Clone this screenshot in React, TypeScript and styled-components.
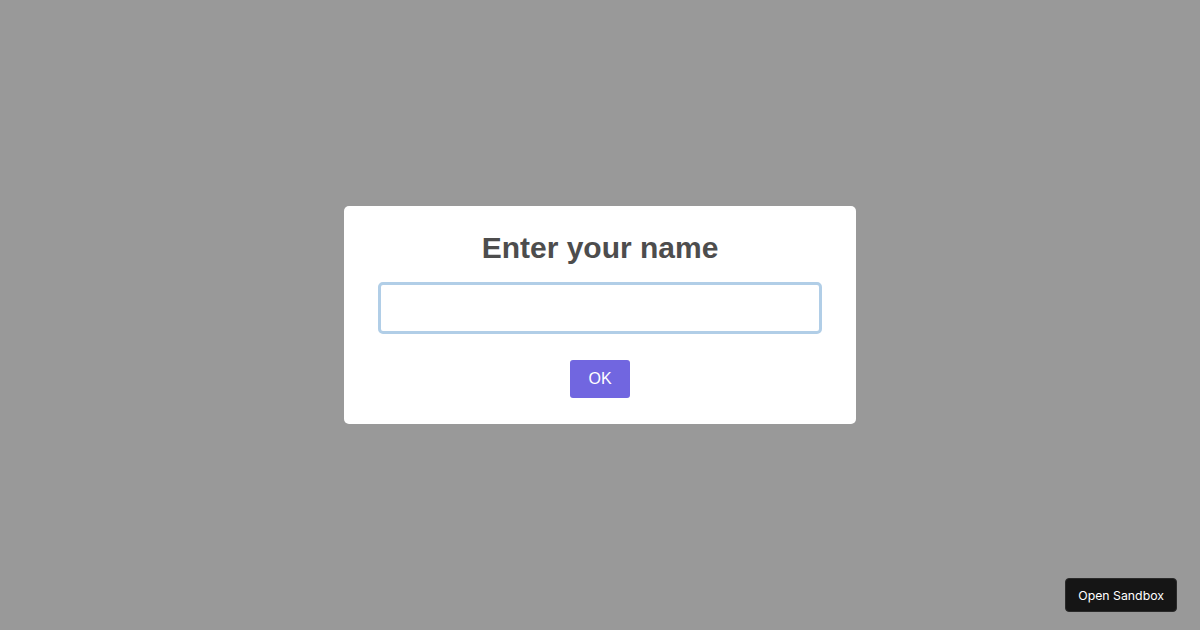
import React from 'react'
import styled, { createGlobalStyle } from 'styled-components'

const GlobalStyle = createGlobalStyle`
  html, body {
    margin: 0;
    padding: 0;
    height: 100%;
  }
  body {
    background: #999999;
    font-family: "Liberation Sans", Arial, sans-serif;
  }
  #root {
    height: 100%;
  }
`

const Page = styled.main`
  height: 630px;
  display: flex;
  align-items: center;
  justify-content: center;
`

const Dialog = styled.form`
  width: 512px;
  box-sizing: border-box;
  padding: 25px 34px 26px;
  background: #ffffff;
  border-radius: 5px;
  display: flex;
  flex-direction: column;
  align-items: center;
`

const Title = styled.h1`
  margin: 0 0 17px;
  font-size: 30px;
  line-height: 34px;
  font-weight: 700;
  color: #4d4d4d;
  text-align: center;
`

const NameInput = styled.input`
  width: 100%;
  height: 52px;
  box-sizing: border-box;
  padding: 0 14px;
  border: 3px solid #b1cee7;
  border-radius: 5px;
  outline: none;
  font-family: inherit;
  font-size: 18px;
  color: #333333;
  caret-color: #333333;
`

const OkButton = styled.button`
  margin-top: 26px;
  width: 60px;
  height: 38px;
  border: none;
  border-radius: 3px;
  background: #7166e0;
  color: #ffffff;
  font-family: inherit;
  font-size: 16px;
  cursor: pointer;
`

const SandboxButton = styled.a`
  position: fixed;
  right: 23px;
  bottom: 18px;
  height: 34px;
  padding: 0 12px;
  display: flex;
  align-items: center;
  background: #151515;
  border: 1px solid #2a2a2a;
  box-sizing: border-box;
  border-radius: 4px;
  color: #ffffff;
  font-family: Inter, "Noto Sans", sans-serif;
  font-size: 12.3px;
  text-decoration: none;
`

export default function App() {
  return (
    <>
      <GlobalStyle />
      <Page>
        <Dialog onSubmit={(e) => e.preventDefault()}>
          <Title>Enter your name</Title>
          <NameInput type="text" autoFocus />
          <OkButton type="submit">OK</OkButton>
        </Dialog>
      </Page>
      <SandboxButton href="#">Open Sandbox</SandboxButton>
    </>
  )
}
